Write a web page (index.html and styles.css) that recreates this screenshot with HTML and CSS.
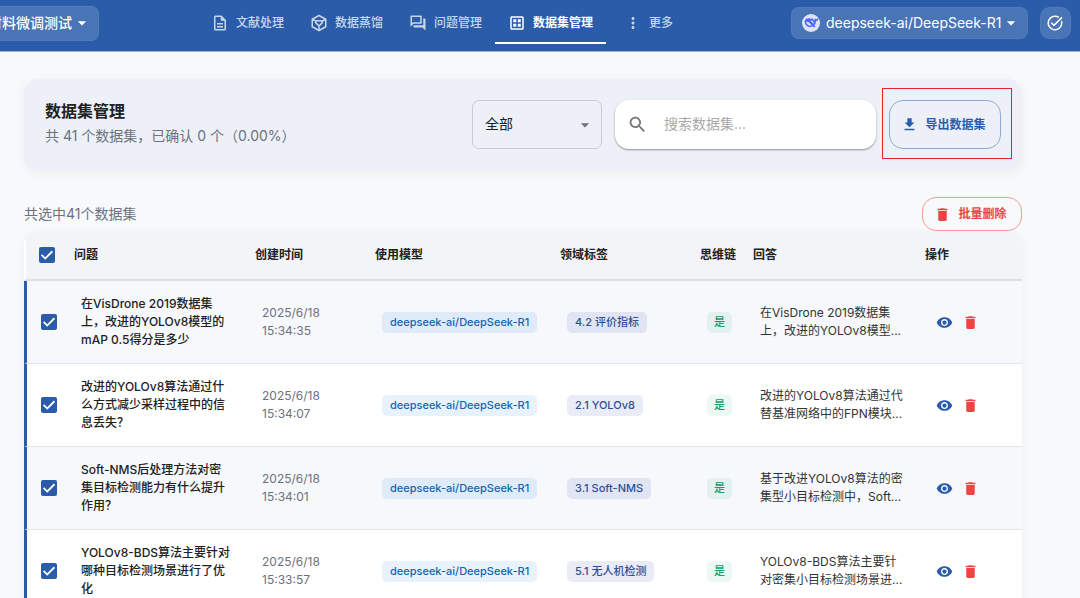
FILE: index.html
```
<!DOCTYPE html>
<html lang="zh-CN">
<head>
  <meta charset="UTF-8" />
  <meta name="viewport" content="width=device-width, initial-scale=1.0"/>
  <title>数据集管理</title>
  <link rel="stylesheet" href="styles.css">
</head>
<body>
  <!-- Shared icons -->
  <svg width="0" height="0" class="sprite" aria-hidden="true">
    <symbol id="icon-caret" viewBox="0 0 24 24"><path d="M7 10l5 5 5-5z"/></symbol>
    <symbol id="icon-delete" viewBox="0 0 24 24"><path d="M6 19c0 1.100.9 2 2 2h8c1.100 0 2-.9 2-2V7H6v12zM19 4h-3.500l-1-1h-5l-1 1H5v2h14V4z"/></symbol>
    <symbol id="icon-view" viewBox="0 0 24 24"><path d="M12 4.500C7 4.500 2.730 7.610 1 12c1.730 4.390 6 7.500 11 7.500s9.270-3.110 11-7.500c-1.730-4.390-6-7.500-11-7.500zM12 17c-2.760 0-5-2.240-5-5s2.240-5 5-5 5 2.240 5 5-2.240 5-5 5zm0-8c-1.660 0-3 1.340-3 3s1.340 3 3 3 3-1.340 3-3-1.340-3-3-3z"/></symbol>
  </svg>

  <header class="topbar">
    <button class="pill project" type="button">
      材料微调测试
      <svg class="icon"><use href="#icon-caret"/></svg>
    </button>

    <nav class="tabs">
      <a href="#" class="tab">
        <svg class="icon" viewBox="0 0 24 24"><path d="M8 16h8v2H8zm0-4h8v2H8zm6-10H6c-1.100 0-2 .9-2 2v16c0 1.100.89 2 1.990 2H18c1.100 0 2-.9 2-2V8l-6-6zm4 18H6V4h7v5h5v11z"/></svg>
        文献处理
      </a>
      <a href="#" class="tab">
        <svg class="icon line" viewBox="0 0 24 24"><path d="M12 2l9 5v10l-9 5-9-5V7zM3 7l5.500 3M21 7l-5.500 3M12 22v-6.500M8.500 9h7l1 2.500-4.500 4.500-4.500-4.500z"/></svg>
        数据蒸馏
      </a>
      <a href="#" class="tab">
        <svg class="icon" viewBox="0 0 24 24"><path d="M15 4v7H5.170L4 12.170V4h11m1-2H3c-.55 0-1 .45-1 1v14l4-4h10c.55 0 1-.45 1-1V3c0-.55-.45-1-1-1zm5 4h-2v9H6v2c0 .55.45 1 1 1h11l4 4V7c0-.55-.45-1-1-1z"/></svg>
        问题管理
      </a>
      <a href="#" class="tab active">
        <svg class="icon" viewBox="0 0 24 24"><path d="M19 3H5c-1.100 0-2 .9-2 2v14c0 1.100.9 2 2 2h14c1.100 0 2-.9 2-2V5c0-1.100-.9-2-2-2zm0 16H5V5h14v14zM7 7h4v4H7zm6 0h4v4h-4zm-6 6h4v4H7zm6 0h4v4h-4z"/></svg>
        数据集管理
      </a>
      <a href="#" class="tab more">
        <svg class="icon" viewBox="0 0 24 24"><path d="M12 8c1.100 0 2-.9 2-2s-.9-2-2-2-2 .9-2 2 .9 2 2 2zm0 2c-1.100 0-2 .9-2 2s.9 2 2 2 2-.9 2-2-.9-2-2-2zm0 6c-1.100 0-2 .9-2 2s.9 2 2 2 2-.9 2-2-.9-2-2-2z"/></svg>
        更多
      </a>
    </nav>

    <div class="tools">
      <div class="pill model">
        <svg class="logo" viewBox="0 0 24 24">
          <circle cx="12" cy="12" r="12" fill="#dfe4f2"/>
          <path d="M3.500 9.500c.3-2.500 2.500-4 5-4 2 0 3.200.8 4.200 1.600-.6-.9-.4-1.600.3-2.100.8 1.600 2.500 2.500 3.500 3.500.2-.8.200-1.800.5-2.700.9.900 2 .9 3.200.4 1.200-.5 1.800-.6 1.600.5-.3 1.800-1.500 2.800-3 3.100-.2 2.500-1.200 4.500-2.600 5.700.8.500 1.700.8 2.200 1.500-1.600.8-3.200.5-4.400-.3-4.700 1.700-10.700-1-10.500-7.200z" fill="#4d6bfe"/>
          <path d="M5.500 10.500c2.300-.5 4.300.8 5.400 2.500.7 1.200 1.600 2 2.600 2.300-3.300.8-7.500-1-8-4.800z" fill="#dfe4f2"/>
          <path d="M12 9.500c1.500 0 3 1.200 3.200 2.800" fill="none" stroke="#dfe4f2" stroke-width="1.500"/>
        </svg>
        <select aria-label="模型">
          <option>deepseek-ai/DeepSeek-R1</option>
        </select>
        <svg class="icon"><use href="#icon-caret"/></svg>
      </div>
      <button class="pill task" type="button" aria-label="任务">
        <svg class="icon" viewBox="0 0 24 24"><path d="M22 5.200L10.600 16.600l-4.300-4.300 1.500-1.400 2.800 2.800 10-10zM19.800 10.200c.1.600.2 1.200.2 1.800 0 4.400-3.600 8-8 8s-8-3.600-8-8 3.600-8 8-8c1.600 0 3 .5 4.300 1.300l1.400-1.500A10 10 0 1 0 22 12c0-1.200-.2-2.400-.6-3.500z"/></svg>
      </button>
    </div>
  </header>

  <main>
    <section class="card">
      <div class="summary">
        <h1>数据集管理</h1>
        <p>共 41 个数据集，已确认 0 个（0.00%）</p>
      </div>
      <div class="filter">
        <select aria-label="状态">
          <option>全部</option>
        </select>
        <svg class="icon"><use href="#icon-caret"/></svg>
      </div>
      <div class="search">
        <svg class="icon" viewBox="0 0 24 24"><path d="M15.500 14h-.79l-.28-.27C15.410 12.590 16 11.110 16 9.500 16 5.910 13.090 3 9.500 3S3 5.910 3 9.500 5.910 16 9.500 16c1.610 0 3.090-.59 4.230-1.570l.27.28v.79l5 4.990L20.490 19l-4.990-5zm-6 0C7.010 14 5 11.990 5 9.500S7.010 5 9.500 5 14 7.010 14 9.500 11.990 14 9.500 14z"/></svg>
        <input type="text" placeholder="搜索数据集..." aria-label="搜索数据集" />
      </div>
      <div class="export">
        <button class="btn" type="button">
          <svg class="icon" viewBox="0 0 24 24"><path d="M19 9h-4V3H9v6H5l7 7 7-7zM5 18v2h14v-2H5z"/></svg>
          导出数据集
        </button>
      </div>
    </section>

    <div class="selection">
      <span>共选中41个数据集</span>
      <button class="btn danger" type="button">
        <svg class="icon"><use href="#icon-delete"/></svg>
        批量删除
      </button>
    </div>

    <div class="table-wrap">
      <table>
        <colgroup>
          <col class="col-check"><col class="col-question"><col class="col-time"><col class="col-model">
          <col class="col-tag"><col class="col-cot"><col class="col-answer"><col class="col-actions">
        </colgroup>
        <thead>
          <tr>
            <th><input type="checkbox" aria-label="全选" checked /></th>
            <th>问题</th>
            <th>创建时间</th>
            <th>使用模型</th>
            <th>领域标签</th>
            <th>思维链</th>
            <th>回答</th>
            <th>操作</th>
          </tr>
        </thead>
        <tbody>
          <tr>
            <td><input type="checkbox" aria-label="选择" checked /></td>
            <td class="question">在VisDrone 2019数据集上，改进的YOLOv8模型的mAP 0.5得分是多少</td>
            <td class="time">2025/6/18 15:34:35</td>
            <td><span class="chip model-chip">deepseek-ai/DeepSeek-R1</span></td>
            <td><span class="chip tag-chip">4.2 评价指标</span></td>
            <td><span class="chip cot-chip">是</span></td>
            <td class="answer">在VisDrone 2019数据集上，改进的YOLOv8模型...</td>
            <td class="actions">
              <button type="button" aria-label="查看"><svg class="icon"><use href="#icon-view"/></svg></button>
              <button type="button" aria-label="删除" class="remove"><svg class="icon"><use href="#icon-delete"/></svg></button>
            </td>
          </tr>
          <tr>
            <td><input type="checkbox" aria-label="选择" checked /></td>
            <td class="question">改进的YOLOv8算法通过什么方式减少采样过程中的信息丢失？</td>
            <td class="time">2025/6/18 15:34:07</td>
            <td><span class="chip model-chip">deepseek-ai/DeepSeek-R1</span></td>
            <td><span class="chip tag-chip">2.1 YOLOv8</span></td>
            <td><span class="chip cot-chip">是</span></td>
            <td class="answer">改进的YOLOv8算法通过代替基准网络中的FPN模块...</td>
            <td class="actions">
              <button type="button" aria-label="查看"><svg class="icon"><use href="#icon-view"/></svg></button>
              <button type="button" aria-label="删除" class="remove"><svg class="icon"><use href="#icon-delete"/></svg></button>
            </td>
          </tr>
          <tr>
            <td><input type="checkbox" aria-label="选择" checked /></td>
            <td class="question">Soft-NMS后处理方法对密集目标检测能力有什么提升作用？</td>
            <td class="time">2025/6/18 15:34:01</td>
            <td><span class="chip model-chip">deepseek-ai/DeepSeek-R1</span></td>
            <td><span class="chip tag-chip">3.1 Soft-NMS</span></td>
            <td><span class="chip cot-chip">是</span></td>
            <td class="answer">基于改进YOLOv8算法的密集型小目标检测中，Soft...</td>
            <td class="actions">
              <button type="button" aria-label="查看"><svg class="icon"><use href="#icon-view"/></svg></button>
              <button type="button" aria-label="删除" class="remove"><svg class="icon"><use href="#icon-delete"/></svg></button>
            </td>
          </tr>
          <tr>
            <td><input type="checkbox" aria-label="选择" checked /></td>
            <td class="question">YOLOv8-BDS算法主要针对哪种目标检测场景进行了优化</td>
            <td class="time">2025/6/18 15:33:57</td>
            <td><span class="chip model-chip">deepseek-ai/DeepSeek-R1</span></td>
            <td><span class="chip tag-chip">5.1 无人机检测</span></td>
            <td><span class="chip cot-chip">是</span></td>
            <td class="answer">YOLOv8-BDS算法主要针对密集小目标检测场景进...</td>
            <td class="actions">
              <button type="button" aria-label="查看"><svg class="icon"><use href="#icon-view"/></svg></button>
              <button type="button" aria-label="删除" class="remove"><svg class="icon"><use href="#icon-delete"/></svg></button>
            </td>
          </tr>
        </tbody>
      </table>
    </div>
  </main>
</body>
</html>
```
FILE: styles.css
```
* {
  box-sizing: border-box;
}

body {
  margin: 0;
  font-family: Inter, "Noto Sans CJK SC", sans-serif;
  font-size: 12px;
  line-height: 18px;
  color: #212121;
  background: #f8f9fb;
  overflow-x: hidden;
}

button,
select,
input {
  font: inherit;
  color: inherit;
}

button {
  cursor: pointer;
}

select {
  appearance: none;
  border: none;
  background: none;
  outline: none;
}

.sprite {
  position: absolute;
}

.icon {
  width: 18px;
  height: 18px;
  fill: currentColor;
  flex: none;
}

.icon.line {
  fill: none;
  stroke: currentColor;
  stroke-width: 2;
  stroke-linejoin: round;
}

/* Top bar */
.topbar {
  display: flex;
  justify-content: space-between;
  height: 52px;
  padding-right: 9px;
  background: #2a5caa;
  border-bottom: 1px solid #9cb4d8;
  color: white;
  overflow: hidden;
}

.pill {
  display: flex;
  align-items: center;
  background: rgba(255, 255, 255, 0.15);
  border: 1px solid rgba(255, 255, 255, 0.05);
  border-radius: 8px;
  font-size: 14px;
}

.pill .icon {
  width: 20px;
  height: 20px;
}

.project {
  height: 35px;
  margin: 6px 0 0 -25px;
  padding: 0 6px 2px 12px;
  font-weight: 500;
}

.tabs {
  display: flex;
  padding-right: 6px;
}

.tab {
  display: flex;
  align-items: center;
  gap: 7px;
  height: 44px;
  padding: 4px 13px 0;
  border-bottom: 2px solid transparent;
  color: rgba(255, 255, 255, 0.75);
  font-weight: 500;
  text-decoration: none;
}

.tab.active {
  color: white;
  font-weight: 700;
  border-color: white;
}

.tab.more {
  margin-left: 5px;
}

.tools {
  display: flex;
  gap: 12px;
  padding-top: 7px;
}

.model {
  height: 32px;
  padding: 0 6px 0 10px;
}

.model .logo {
  width: 18px;
  height: 18px;
  margin-right: 6px;
}

.model select {
  padding: 0;
}

.pill.model .icon {
  margin-left: -1px;
}

.task {
  width: 31px;
  height: 32px;
  padding: 0;
  justify-content: center;
  border-radius: 10px;
}

.pill.task .icon {
  width: 18px;
  height: 18px;
}

/* Summary card */
main {
  padding: 27px 58px 0 24px;
}

.card {
  display: flex;
  align-items: flex-start;
  padding: 21px;
  border-radius: 14px;
  background: #edf0f6;
  box-shadow: 0 3px 12px rgba(0, 0, 0, 0.05);
}

.summary {
  flex: 1;
}

.summary h1 {
  margin: 0;
  font-size: 16px;
  line-height: 23px;
  font-weight: 700;
}

.summary p {
  margin: 2px 0 0;
  font-size: 14px;
  line-height: 22px;
  color: #6b7280;
}

.filter {
  display: flex;
  align-items: center;
  width: 130px;
  height: 49px;
  margin-right: 13px;
  padding-right: 6px;
  border: 1px solid #c8cbd1;
  border-radius: 7px;
}

.filter select {
  flex: 1;
  min-width: 0;
  height: 100%;
  padding: 0 0 2px 12px;
  font-size: 14px;
}

.filter .icon {
  width: 20px;
  height: 20px;
  color: #6e7177;
}

.search {
  display: flex;
  align-items: center;
  width: 261px;
  height: 49px;
  margin-right: 13px;
  padding: 0 12px;
  border-radius: 14px;
  background: white;
  box-shadow: 0 1px 2px rgba(0, 0, 0, 0.4);
}

.search .icon {
  width: 21px;
  height: 21px;
  color: #757575;
}

.search input {
  flex: 1;
  min-width: 0;
  margin-left: 16px;
  padding: 0 0 2px;
  border: none;
  outline: none;
  background: none;
  font-size: 14px;
}

.search input::placeholder {
  color: #a8a8a8;
}

.btn {
  display: flex;
  align-items: center;
  justify-content: center;
  gap: 7px;
  padding: 0 9px 0 6px;
  border: 1px solid #8faad5;
  border-radius: 14px;
  background: none;
  color: #2a5caa;
  font-weight: 600;
}

.btn .icon {
  width: 17px;
  height: 17px;
}

/* Highlighted action */
.export {
  position: relative;
}

.export::after {
  content: "";
  position: absolute;
  inset: -12px -11px -10px -7px;
  border: 1px solid #e8202a;
  pointer-events: none;
}

.export .btn {
  width: 112px;
  height: 49px;
}

.selection {
  display: flex;
  align-items: center;
  justify-content: space-between;
  margin-top: 27px;
  font-size: 14px;
  color: #6b7280;
}

.btn.danger {
  width: 100px;
  height: 34px;
  border-color: #f69a9a;
  color: #ef4444;
  font-size: 12px;
}

/* Dataset table */
.table-wrap {
  border-radius: 14px 14px 0 0;
  overflow: hidden;
  box-shadow: 0 2px 8px rgba(0, 0, 0, 0.05);
}

table {
  width: 100%;
  table-layout: fixed;
  border-collapse: separate;
  border-spacing: 0;
}

.col-check { width: 37px; }
.col-question { width: 181px; }
.col-time { width: 120px; }
.col-model { width: 185px; }
.col-tag { width: 140px; }
.col-cot { width: 53px; }
.col-answer { width: auto; }
.col-actions { width: 110px; }

th {
  height: 50px;
  padding: 0 0 0 13px;
  border-bottom: 2px solid #dcdee1;
  background: #f3f4f6;
  text-align: left;
  font-weight: 700;
  white-space: nowrap;
}

td {
  height: 83px;
  padding: 14px 6px 14px 20px;
  border-bottom: 1px solid #e5e7eb;
  background: white;
}

tbody tr:nth-child(odd) td {
  background: #f6f8fc;
}

td:first-child {
  padding: 0 0 0 14px;
  border-left: 3px solid #2a5caa;
}

th:first-child {
  padding-left: 13px;
  border-left: 2px solid white;
}

input[type="checkbox"] {
  display: block;
  appearance: none;
  width: 16px;
  height: 16px;
  margin: 0;
  border-radius: 2px;
  background: #2a5caa;
}

input[type="checkbox"]:checked::before {
  content: "";
  display: block;
  width: 16px;
  height: 16px;
  background: white;
  clip-path: polygon(12% 53%, 20% 45%, 39% 64%, 80% 22%, 88% 31%, 39% 80%);
}

.question {
  padding-right: 9px;
  font-weight: 500;
}

.time {
  padding-right: 30px;
  color: #6b7280;
}

.chip {
  display: inline-block;
  padding: 1px 8px 2px;
  border-radius: 5px;
  font-size: 11px;
  font-weight: 500;
  white-space: nowrap;
}

.model-chip {
  color: #1565b0;
  background: rgba(33, 140, 230, 0.11);
}

.tag-chip {
  color: #2f4f95;
  background: rgba(42, 72, 170, 0.1);
}

.cot-chip {
  padding: 1px 7px 2px;
  color: #1b9c6b;
  background: rgba(16, 160, 110, 0.08);
}

.answer {
  color: #333;
}

.actions {
  padding-left: 24px;
  white-space: nowrap;
}

.actions button {
  display: inline-flex;
  padding: 0;
  border: none;
  background: none;
  color: #2a5caa;
  margin-right: 6px;
  vertical-align: middle;
}

.actions .icon {
  width: 17px;
  height: 17px;
}

.actions .remove {
  color: #ef4444;
}
```
